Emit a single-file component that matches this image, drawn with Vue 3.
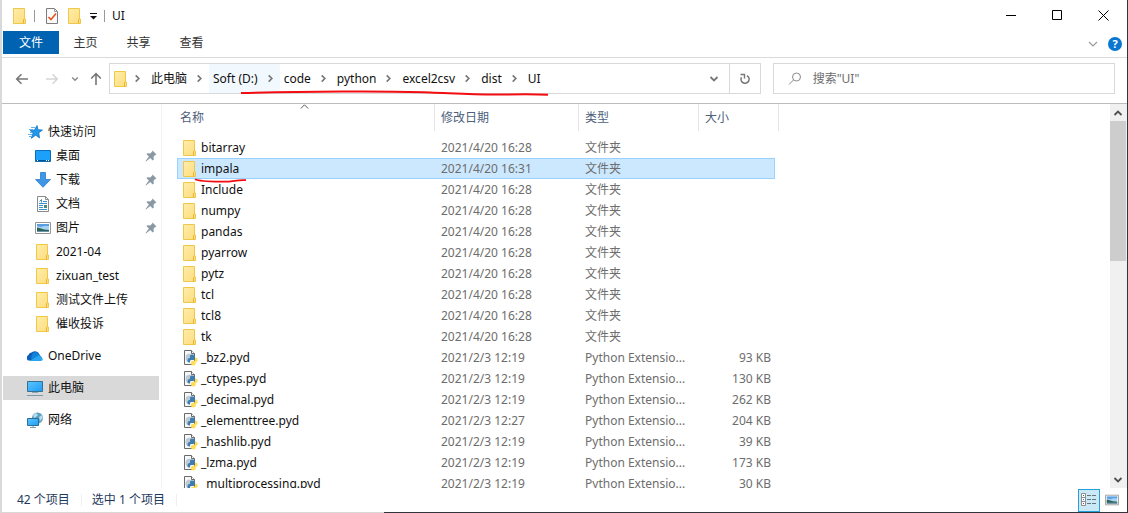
<template>
  <div class="desktop">
    <svg class="sprite" aria-hidden="true">
      <defs>
        <linearGradient id="folder-fill" x1="0" y1="0" x2="1" y2="1">
          <stop offset="0" stop-color="#ffedab" />
          <stop offset="1" stop-color="#fddc7c" />
        </linearGradient>
        <linearGradient id="blue-fill" x1="0" y1="0" x2="1" y2="1">
          <stop offset="0" stop-color="#5cc6ff" />
          <stop offset="1" stop-color="#1e9bf4" />
        </linearGradient>
      </defs>
      <symbol id="folder" viewBox="0 0 16 16">
        <path d="M1.500.5h11v10.500h1v4.500h-12z" fill="url(#folder-fill)" stroke="#efc84a" />
        <path d="M11.500 15.500v-4l1-1" fill="none" stroke="#e3b735" />
      </symbol>
      <symbol id="star" viewBox="0 0 16 16">
        <path d="M10 1.500l1 4.200 4.500.3-3.700 2.700.7 5.300-3.700-2.800-4.600 3.100 1.900-5.200L3 6.500l4.500-.5z" fill="#2196ea" stroke="#1678c2" stroke-width=".8" />
        <path d="M4 3.500h4M2 5.500h4M3 8.500h2M1 10.500h4M2 12.500h2" stroke="#5fb4ec" />
      </symbol>
      <symbol id="desktop" viewBox="0 0 16 16">
        <path d="M.5 2.500h15v11H.5z" fill="#1ba1fb" stroke="#0a6fb8" />
        <path d="M1 12.500h14" stroke="#07518c" />
        <path d="M2 12.500h1M11 12.500h1M13 12.500h1" stroke="#fff" />
      </symbol>
      <symbol id="download" viewBox="0 0 16 16">
        <path d="M5.500.5h5v7h5L8 15.300.5 7.500h5z" fill="#3d96e6" stroke="#2b7ccb" stroke-width=".8" />
      </symbol>
      <symbol id="document" viewBox="0 0 16 16">
        <path d="M2.500.5h8l3 3v12h-11z" fill="#fff" stroke="#8a8a8a" />
        <path d="M10.500.5v3h3" fill="none" stroke="#8a8a8a" />
        <path d="M4.500 5.500l2-2v3M8 5.500h4M4 7.500h8M4 9.500h4M4 11.500h4M4 13.500h8" fill="none" stroke="#3c8fc9" />
        <path d="M9 9h3v3H9z" fill="#4a8a78" />
      </symbol>
      <symbol id="picture" viewBox="0 0 16 16">
        <path d="M.5 2.500h15v11H.5z" fill="#fff" stroke="#969696" />
        <path d="M2 4h12v8H2z" fill="#a6d3f5" />
        <path d="M2 4h12v2H9L6 7 2 6z" fill="#5b9fe3" />
        <path d="M2 7.500l4 1 3 1 5 .5v2H2z" fill="#2f6256" />
        <path d="M2 11h12v1H2z" fill="#6d93ab" />
      </symbol>
      <symbol id="cloud" viewBox="0 0 16 16">
        <path d="M1.200 12.500a3 3 0 0 1 0-5.200A4.500 4.500 0 0 1 5 4.200a5 5 0 0 1 7.500 2.300l-7 6z" fill="#0a5fb8" />
        <path d="M5 6.500a4 4 0 0 1 7.500 0L15 10 4 11z" fill="#1282d8" />
        <path d="M2 13l7-4 2.500-1.500a3.500 3 0 0 1 3.500 2.200c1 .8 1.300 3.300-1.500 3.300z" fill="#2aa5ef" />
      </symbol>
      <symbol id="computer" viewBox="0 0 16 16">
        <path d="M.5 1.500h15v10H.5z" fill="url(#blue-fill)" stroke="#37718f" />
        <path d="M5 12.500h6" stroke="#8aa5b3" />
        <path d="M0 15.500h16" stroke="#7c99a8" />
      </symbol>
      <symbol id="network" viewBox="0 0 16 16">
        <circle cx="10.500" cy="6" r="5.500" fill="#5b9fc0" />
        <path d="M6 3l3-2 2 2-2 2-2 1zM12 5l3-2 .8 3-2.800 3z" fill="#b9dceb" />
        <path d="M.5 6.500h11v7H.5z" fill="url(#blue-fill)" stroke="#2b6f96" />
        <path d="M3 15.500h6M6 14v1" stroke="#7f9dac" />
      </symbol>
      <symbol id="pin" viewBox="0 0 12 12">
        <path d="M7.500.5l4 4-1.300.5-1.700 1.800.3 2.700-1.100 1-2.400-2.400L1 11.500l-.5-.3 3.400-4.600L1.500 4.200l1-1 2.800.2L7.100 1.800z" fill="#8a98a3" />
      </symbol>
      <symbol id="python" viewBox="0 0 16 16">
        <path d="M2.500.5h7l3 3v11h-10z" fill="#f6f7f8" stroke="#6a6a6a" />
        <path d="M9.500.5v3h3" fill="#fff" stroke="#6a6a6a" />
        <path d="M4 5l3-1.500 3 1-2.500 7.500H5L3.500 9z" fill="#bccad6" />
        <path d="M8 6q0-1.500 1.800-1.500h1.400q1.800 0 1.800 1.500v2.300q0 1.700-1.700 1.700H9.200Q8 10 8 11.200v1.300H7Q5.500 12.500 5.500 10.500T7 8H8z" fill="#3f7cb0" />
        <path d="M13 7.500h.7q2 0 2 2.200T13.700 12v1.800q0 1.700-2.300 1.700T9 13.800v-1.500q0-1.300 1.200-1.300h1.300q1.500 0 1.500-1.500z" fill="#ffdd55" />
      </symbol>
      <symbol id="chevron" viewBox="0 0 10 10">
        <path d="M1.500 3L5 6.500 8.500 3" fill="none" stroke="currentColor" stroke-width="1.800" />
      </symbol>
    </svg>

    <main class="window">
      <header class="title-bar">
        <svg class="icon"><use href="#folder" /></svg>
        <span class="divider"></span>
        <button class="quick" aria-label="属性">
          <svg class="icon" viewBox="0 0 16 16">
            <path d="M2.500.5h8l3 3v12h-11z" fill="#fafafa" stroke="#7d7d7d" />
            <path d="M10.500.5v3h3" fill="none" stroke="#9a9a9a" />
            <path d="M4.500 9l2.500 2.500 5-6" fill="none" stroke="#e8541e" stroke-width="1.600" />
          </svg>
        </button>
        <button class="quick" aria-label="新建文件夹">
          <svg class="icon"><use href="#folder" /></svg>
        </button>
        <button class="quick customize" aria-label="自定义快速访问工具栏">
          <svg width="8" height="8" viewBox="0 0 8 8">
            <path d="M0 1.500h7" stroke="#111" />
            <path d="M0 4h7L3.500 7.500z" fill="#111" />
          </svg>
        </button>
        <span class="divider"></span>
        <span class="title">UI</span>
        <div class="controls">
          <button aria-label="最小化">
            <svg width="11" height="11"><path d="M0 5.500h10" stroke="#000" /></svg>
          </button>
          <button aria-label="最大化">
            <svg width="11" height="11"><path d="M.5.5h9v9h-9z" fill="none" stroke="#000" /></svg>
          </button>
          <button aria-label="关闭">
            <svg width="11" height="11"><path d="M.5.5l10 10M10.500.5l-10 10" stroke="#000" /></svg>
          </button>
        </div>
      </header>

      <nav class="tabs">
        <button
          v-for="tab in tabs"
          :key="tab"
          class="tab"
          :class="{ active: tab === activeTab }"
          @click="activeTab = tab"
        >{{ tab }}</button>
        <div class="ribbon-tools">
          <button class="expand" aria-label="展开功能区">
            <svg width="10" height="10" viewBox="0 0 10 10">
              <path d="M1 3l4 4 4-4" fill="none" stroke="#9a9a9a" stroke-width="1.200" />
            </svg>
          </button>
          <button class="help" aria-label="帮助">?</button>
        </div>
      </nav>

      <div class="nav-row">
        <div class="history">
          <button aria-label="后退">
            <svg width="14" height="12" viewBox="0 0 14 12"><path d="M13 6H2M6.500 1.200L1.700 6l4.800 4.800" fill="none" stroke="#777" stroke-width="1.600" /></svg>
          </button>
          <button aria-label="前进" disabled>
            <svg width="14" height="12" viewBox="0 0 14 12"><path d="M1 6h11M7.500 1.200L12.300 6l-4.800 4.800" fill="none" stroke="#d6d6d6" stroke-width="1.600" /></svg>
          </button>
          <button class="recent" aria-label="最近浏览的位置">
            <svg width="8" height="8"><use href="#chevron" /></svg>
          </button>
          <button class="up" aria-label="上移">
            <svg width="12" height="14" viewBox="0 0 12 14"><path d="M6 13V2M1.200 6.500L6 1.700l4.800 4.800" fill="none" stroke="#777" stroke-width="1.600" /></svg>
          </button>
        </div>
        <div class="address">
          <svg class="icon"><use href="#folder" /></svg>
          <svg class="arrow" viewBox="0 0 10 10"><use href="#chevron" /></svg>
          <div class="crumbs">
            <div v-for="(crumb, i) in crumbs" :key="crumb" class="crumb" :class="{ hovered: crumb === 'Soft (D:)' }">
              <button>{{ crumb }}</button>
              <svg v-if="i < crumbs.length - 1" class="arrow" viewBox="0 0 10 10"><use href="#chevron" /></svg>
            </div>
            <svg class="mark path-mark" viewBox="0 0 310 6" width="310" height="6">
              <path d="M1 3C60 1.500 150 .8 190 2.500S240 5 265 4.500s30-.5 43 .3" fill="none" stroke="#f30d12" stroke-width="2" />
            </svg>
          </div>
          <button class="dropdown" aria-label="以前的位置">
            <svg width="10" height="10"><use href="#chevron" /></svg>
          </button>
          <button class="refresh" aria-label="刷新">
            <svg width="12" height="12" viewBox="0 0 12 12">
              <path d="M8 2.700a4 4 0 1 1-5.500 1.700" fill="none" stroke="#777" stroke-width="1.600" />
              <path d="M1.500 1.500h4v4" fill="none" stroke="#777" stroke-width="1.400" />
            </svg>
          </button>
        </div>
        <label class="search">
          <svg width="14" height="14" viewBox="0 0 14 14">
            <circle cx="8.500" cy="5" r="4" fill="none" stroke="#8a8a8a" />
            <path d="M5.500 8L1 12.500" stroke="#8a8a8a" />
          </svg>
          <input v-model="query" type="text" placeholder='搜索"UI"' aria-label="搜索" />
        </label>
      </div>

      <div class="body">
        <aside class="sidebar">
          <a
            v-for="item in places"
            :key="item.name"
            href="#"
            class="place"
            :class="{ root: item.root, current: item.current }"
          >
            <svg class="icon"><use :href="'#' + item.icon" /></svg>
            <span>{{ item.name }}</span>
            <svg v-if="item.pinned" class="pin"><use href="#pin" /></svg>
          </a>
        </aside>

        <section class="files">
          <table>
            <thead>
              <tr>
                <th>
                  名称
                  <svg class="sort" width="9" height="5" viewBox="0 0 9 5"><path d="M.8 4.500l3.700-3.700 3.700 3.700" fill="none" stroke="#5a5a5a" /></svg>
                </th>
                <th>修改日期</th>
                <th>类型</th>
                <th>大小</th>
              </tr>
            </thead>
            <tbody>
              <tr
                v-for="file in files"
                :key="file.name"
                :class="{ selected: file.name === selected }"
                @click="selected = file.name"
              >
                <td class="name">
                  <svg class="icon"><use :href="file.size ? '#python' : '#folder'" /></svg>
                  <span>{{ file.name }}</span>
                  <svg v-if="file.name === 'impala'" class="mark name-mark" viewBox="0 0 54 5" width="54" height="5">
                    <path d="M1 1.200C6 3.500 16 3.500 28 3.700S42 1.500 52 2.200" fill="none" stroke="#f30d12" stroke-width="1.800" />
                  </svg>
                </td>
                <td>{{ file.date }}</td>
                <td>{{ file.size ? 'Python Extensio...' : '文件夹' }}</td>
                <td class="size">{{ file.size }}</td>
              </tr>
            </tbody>
          </table>
        </section>

        <div class="scrollbar">
          <button aria-label="向上滚动"><svg class="flip" width="10" height="10"><use href="#chevron" /></svg></button>
          <div class="track"><div class="thumb"></div></div>
          <button aria-label="向下滚动"><svg width="10" height="10"><use href="#chevron" /></svg></button>
        </div>
      </div>

      <footer class="status">
        <span>42 个项目</span>
        <span>选中 1 个项目</span>
        <div class="views">
          <button class="on" aria-label="详细信息">
            <svg width="18" height="16" viewBox="0 0 18 16">
              <path d="M1.500 1.500h4v12h-4zM1.500 5.500h4M1.500 9.500h4" fill="#fff" stroke="#8d8d8d" />
              <path d="M7 3.500h4M12 3.500h4M7 7.500h4M12 7.500h4M7 11.500h4M12 11.500h4" stroke="#66747c" />
              <path d="M3 3.500h1" stroke="#555" />
              <path d="M3 7.500h1" stroke="#2f87d8" />
              <path d="M3 11.500h1" stroke="#d02b2b" />
            </svg>
          </button>
          <button aria-label="大缩略图"><svg width="14" height="16"><use href="#picture" /></svg></button>
        </div>
      </footer>
    </main>
  </div>
</template>

<script setup>
import { ref } from 'vue';

const tabs = ['文件', '主页', '共享', '查看'];
const activeTab = ref('文件');
const crumbs = ['此电脑', 'Soft (D:)', 'code', 'python', 'excel2csv', 'dist', 'UI'];
const query = ref('');
const selected = ref('impala');

const places = [
  { name: '快速访问', icon: 'star', root: true },
  { name: '桌面', icon: 'desktop', pinned: true },
  { name: '下载', icon: 'download', pinned: true },
  { name: '文档', icon: 'document', pinned: true },
  { name: '图片', icon: 'picture', pinned: true },
  { name: '2021-04', icon: 'folder' },
  { name: 'zixuan_test', icon: 'folder' },
  { name: '测试文件上传', icon: 'folder' },
  { name: '催收投诉', icon: 'folder' },
  { name: 'OneDrive', icon: 'cloud', root: true },
  { name: '此电脑', icon: 'computer', root: true, current: true },
  { name: '网络', icon: 'network', root: true },
];

const files = [
  { name: 'bitarray', date: '2021/4/20 16:28' },
  { name: 'impala', date: '2021/4/20 16:31' },
  { name: 'Include', date: '2021/4/20 16:28' },
  { name: 'numpy', date: '2021/4/20 16:28' },
  { name: 'pandas', date: '2021/4/20 16:28' },
  { name: 'pyarrow', date: '2021/4/20 16:28' },
  { name: 'pytz', date: '2021/4/20 16:28' },
  { name: 'tcl', date: '2021/4/20 16:28' },
  { name: 'tcl8', date: '2021/4/20 16:28' },
  { name: 'tk', date: '2021/4/20 16:28' },
  { name: '_bz2.pyd', date: '2021/2/3 12:19', size: '93 KB' },
  { name: '_ctypes.pyd', date: '2021/2/3 12:19', size: '130 KB' },
  { name: '_decimal.pyd', date: '2021/2/3 12:19', size: '262 KB' },
  { name: '_elementtree.pyd', date: '2021/2/3 12:27', size: '204 KB' },
  { name: '_hashlib.pyd', date: '2021/2/3 12:19', size: '39 KB' },
  { name: '_lzma.pyd', date: '2021/2/3 12:19', size: '173 KB' },
  { name: '_multiprocessing.pyd', date: '2021/2/3 12:19', size: '30 KB' },
];
</script>

<style>
body {
  margin: 0;
  overflow: hidden;
}
</style>

<style scoped>
.desktop {
  box-sizing: border-box;
  height: 100vh;
  padding: 0 1px 1px 2px;
  background: linear-gradient(90deg, #d9d9d9 34%, #34343c 34%);
  font: 12px/20px "Noto Sans", "Noto Sans CJK SC", sans-serif;
  color: #111;
}

.desktop button,
.desktop input {
  padding: 0;
  border: 0;
  background: none;
  font: inherit;
  color: inherit;
}

.desktop svg {
  flex: none;
}

.sprite {
  position: absolute;
  width: 0;
  height: 0;
}

.icon {
  width: 16px;
  height: 16px;
}

.window {
  display: flex;
  flex-direction: column;
  height: 100%;
  background: #fff;
}

/* title bar */
.title-bar {
  display: flex;
  align-items: center;
  height: 31px;
  padding-left: 10px;
}

.divider {
  width: 1px;
  height: 12px;
  margin: 0 9px 0 6px;
  background: #999;
}

.desktop .quick {
  display: flex;
  margin-right: 7px;
}

.desktop .customize {
  margin-right: 6px;
}

.customize + .divider {
  margin: 0 7px 0 0;
}

.controls {
  display: flex;
  align-self: stretch;
  margin-left: auto;
  padding-right: 1px;
}

.controls button {
  display: flex;
  align-items: center;
  justify-content: center;
  width: 46px;
}

/* ribbon tabs */
.tabs {
  display: flex;
  height: 26px;
  padding-left: 1px;
  border-bottom: 1px solid #dadbdc;
}

.tabs .tab {
  width: 53px;
  height: 23px;
  line-height: 24px;
  color: #333;
}

.tabs .active {
  width: 56px;
  background: #0063b1;
  color: #fff;
}

.ribbon-tools {
  display: flex;
  align-items: center;
  gap: 10px;
  margin-left: auto;
  padding-right: 5px;
}

.expand {
  display: flex;
}

.ribbon-tools .help {
  width: 14px;
  height: 14px;
  border-radius: 50%;
  background: #0b76d1;
  color: #fff;
  font-size: 11px;
  font-weight: bold;
  line-height: 14px;
}

/* address row */
.nav-row {
  display: grid;
  grid-template-columns: 107px minmax(0, 663fr) minmax(0, 342fr);
  align-items: center;
  height: 41px;
  padding: 0 12px 4px 0;
  border-bottom: 1px solid #bcbcbc;
}

.history {
  display: flex;
  padding-left: 5px;
  color: #8a8a8a;
}

.history button {
  display: flex;
  align-items: center;
  justify-content: center;
  width: 30px;
  height: 20px;
}

.history .recent {
  width: 16px;
}

.history .up {
  width: 26px;
}

.address,
.search {
  display: flex;
  align-items: center;
  box-sizing: border-box;
  height: 31px;
  border: 1px solid #d9d9d9;
}

.address {
  padding-left: 3px;
  margin-right: 12px;
  color: #777;
}

.arrow {
  width: 9px;
  height: 9px;
  margin: 0 5px 0 4px;
  transform: rotate(-90deg);
}

.crumbs {
  position: relative;
  display: flex;
  align-self: stretch;
}

.crumb {
  display: flex;
  align-items: center;
}

.crumb button {
  padding: 0 4px;
  color: #111;
  white-space: nowrap;
}

.hovered {
  background: #f2f9fe;
}

.mark {
  position: absolute;
  pointer-events: none;
}

.path-mark {
  left: 93px;
  bottom: -3px;
}

.address .dropdown {
  display: flex;
  align-items: center;
  justify-content: center;
  width: 30px;
  margin-left: auto;
}

.address .refresh {
  display: flex;
  align-items: center;
  align-self: stretch;
  justify-content: center;
  width: 31px;
  border-left: 1px solid #d9d9d9;
}

.search {
  gap: 11px;
  padding-left: 14px;
}

.search input {
  flex: 1;
  min-width: 0;
  outline: none;
}

.search input::placeholder {
  color: #6d6d6d;
  opacity: 1;
}

/* folders and files */
.body {
  display: flex;
  flex: 1;
  min-height: 0;
}

.sidebar {
  box-sizing: border-box;
  width: 160px;
  padding: 16px 2px 0 1px;
  border-right: 1px solid #f2f2f2;
}

.place {
  display: flex;
  align-items: center;
  height: 24px;
  padding: 0 2px 0 32px;
  color: #111;
  text-decoration: none;
}

.place span {
  margin-left: 5px;
}

.root {
  margin-top: 8px;
  padding-left: 24px;
}

.root:first-child {
  margin-top: 0;
}

.current {
  background: #d9d9d9;
}

.pin {
  width: 12px;
  height: 12px;
  margin-left: auto;
}

.files {
  flex: 1;
  min-width: 0;
  overflow: hidden;
  padding-left: 15px;
}

table {
  display: block;
}

thead {
  display: block;
  margin-bottom: 6px;
}

tbody {
  display: block;
}

tr {
  display: grid;
  grid-template-columns: 258px 144px 120px 76px;
  width: max-content;
}

thead tr {
  grid-template-columns: 258px 144px 120px 80px;
}

th {
  position: relative;
  height: 27px;
  padding: 0 6px;
  border-right: 1px solid #e5e5e5;
  color: #4c607a;
  font-weight: normal;
  line-height: 27px;
  text-align: left;
}

th:first-child {
  padding-left: 3px;
}

.sort {
  position: absolute;
  top: 0;
  left: 48%;
}

td {
  height: 21px;
  padding: 0 6px;
  color: #6d6d6d;
  line-height: 21px;
  white-space: nowrap;
}

.name {
  position: relative;
  display: flex;
  align-items: center;
  gap: 3px;
  padding-left: 5px;
  color: #111;
}

.name-mark {
  left: 17px;
  bottom: -4px;
  z-index: 1;
}

.size {
  padding-right: 4px;
  text-align: right;
}

.selected {
  background: #cce8ff;
  outline: 1px solid #99d1ff;
  outline-offset: -1px;
}

.scrollbar {
  display: flex;
  flex-direction: column;
  width: 16px;
  padding-right: 1px;
  background: #f0f0f0;
  color: #505050;
}

.scrollbar button {
  display: flex;
  align-items: center;
  justify-content: center;
  height: 17px;
}

.flip {
  transform: rotate(180deg);
}

.track {
  flex: 1;
}

.thumb {
  height: 40%;
  background: #cdcdcd;
}

/* status bar */
.status {
  display: flex;
  align-items: center;
  height: 24px;
  padding-left: 15px;
  color: #1e395b;
}

.status span {
  padding-right: 11px;
  margin-right: 10px;
  border-right: 1px solid #f0f0f0;
  line-height: 12px;
}

.views {
  display: flex;
  gap: 4px;
  margin-left: auto;
  padding-right: 7px;
}

.views button {
  display: flex;
  align-items: center;
  justify-content: center;
  width: 16px;
  height: 23px;
}

.views .on {
  box-sizing: border-box;
  width: 22px;
  border: 1px solid #26a0da;
  background: #cbe8f6;
}
</style>
